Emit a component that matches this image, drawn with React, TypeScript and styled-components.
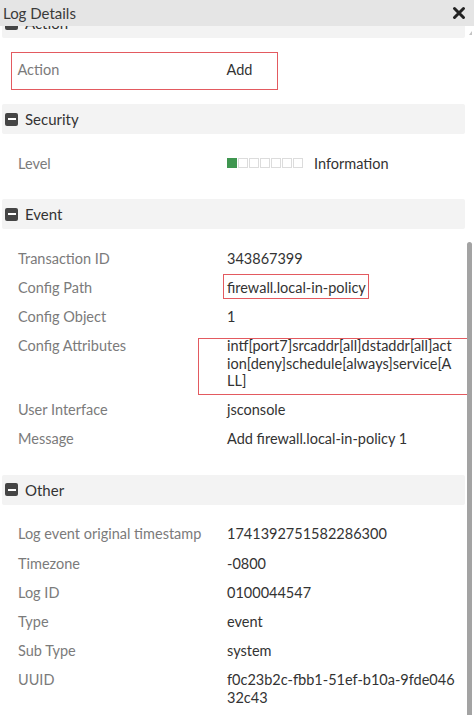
import React from "react";
import styled, { createGlobalStyle } from "styled-components";

const Global = createGlobalStyle`
  html, body { margin: 0; padding: 0; background: #fff; }
  body { font-family: Lato, "Open Sans", Arial, sans-serif; }
`;

const Page = styled.div`
  width: 474px;
  height: 715px;
  display: flex;
  flex-direction: column;
  overflow: hidden;
  background: #fff;
`;

const TitleBar = styled.div`
  height: 26px;
  flex: none;
  display: flex;
  align-items: center;
  justify-content: space-between;
  padding: 0 8px 0 3px;
  background: #e5e5e5;
  color: #3a3a3a;
  font-size: 15px;
  position: relative;
  z-index: 2;
`;

const CloseBtn = styled.button`
  border: 0;
  background: transparent;
  padding: 0;
  width: 14px;
  height: 14px;
  display: flex;
`;

const Viewport = styled.div`
  flex: 1;
  position: relative;
  overflow: hidden;
`;

const Content = styled.div<{ $scroll: number }>`
  margin-top: ${(p) => -p.$scroll}px;
`;

const Thumb = styled.div`
  position: absolute;
  right: 2px;
  top: 216px;
  bottom: 0;
  width: 5px;
  background: #a3a3a3;
  border-radius: 3px 3px 0 0;
`;

const UpArrow = styled.div`
  position: absolute;
  right: 2px;
  top: 5px;
  width: 0;
  height: 0;
  border-left: 3px solid transparent;
  border-bottom: 4px solid #c4c4c4;
`;

const SectionHeader = styled.div`
  height: 30px;
  margin: 0 9px 0 2px;
  padding-left: 3px;
  display: flex;
  align-items: center;
  gap: 7px;
  background: #f3f3f3;
  border-radius: 2px;
  color: #333;
  font-size: 15px;
`;

const ToggleIcon = styled.span`
  width: 13px;
  height: 13px;
  border-radius: 2px;
  background: #454545;
  display: flex;
  align-items: center;
  justify-content: center;
  &::after {
    content: "";
    width: 8px;
    height: 2.5px;
    background: #fff;
  }
`;

const SectionBody = styled.div<{ $top?: number; $bottom?: number }>`
  padding: ${(p) => p.$top ?? 14.5}px 0 ${(p) => p.$bottom ?? 20.5}px 18px;
`;

const Row = styled.div<{ $boxed?: boolean }>`
  display: grid;
  grid-template-columns: 209px 230px;
  padding: 6px 0;
  font-size: 14.5px;
  line-height: 17.2px;
  ${(p) =>
    p.$boxed &&
    `
    width: 267px;
    height: 38px;
    box-sizing: border-box;
    margin-left: -7px;
    padding: 0 0 3px 5.5px;
    align-items: center;
    grid-template-columns: 209px 1fr;
    border: 1.5px solid #e35a60;
  `}
`;

const Label = styled.div`
  color: #7b7b7b;
`;

const Value = styled.div`
  color: #333;
  word-break: break-all;
  display: flex;
  align-items: center;
  gap: 11px;
`;

const Marked = styled.span`
  position: relative;
`;

const Mark = styled.span<{ $inset: string }>`
  position: absolute;
  inset: ${(p) => p.$inset};
  border: 1.5px solid #e35a60;
  pointer-events: none;
`;

const Level = styled.span`
  display: flex;
  gap: 1px;
`;

const LevelCell = styled.span<{ $on?: boolean }>`
  width: 10px;
  height: 10px;
  box-sizing: border-box;
  background: ${(p) => (p.$on ? "#3f9650" : "#fff")};
  border: 1px solid ${(p) => (p.$on ? "#3f9650" : "#dcdcdc")};
`;

type Item = { label: string; value: React.ReactNode };

const Section = ({
  title,
  items,
  top,
  bottom,
}: {
  title: string;
  items: Item[];
  top?: number;
  bottom?: number;
}) => (
  <>
    <SectionHeader>
      <ToggleIcon />
      {title}
    </SectionHeader>
    <SectionBody $top={top} $bottom={bottom}>
      {items.map((it) => (
        <Row key={it.label}>
          <Label>{it.label}</Label>
          <Value>{it.value}</Value>
        </Row>
      ))}
    </SectionBody>
  </>
);

export default function App() {
  return (
    <Page>
      <Global />
      <TitleBar>
        Log Details
        <CloseBtn aria-label="Close">
          <svg width="14" height="14" viewBox="0 0 14 14">
            <path d="M2.5 2.5 L11.5 11.5 M11.5 2.5 L2.5 11.5" stroke="#222" strokeWidth="3" strokeLinecap="round" />
          </svg>
        </CloseBtn>
      </TitleBar>
      <Viewport>
        <Content $scroll={18}>
          <SectionHeader>
            <ToggleIcon />
            Action
          </SectionHeader>
          <SectionBody $top={14} $bottom={14}>
            <Row $boxed>
              <Label>Action</Label>
              <Value>Add</Value>
            </Row>
          </SectionBody>
          <Section
            title="Security"
            bottom={21.5}
            items={[
              {
                label: "Level",
                value: (
                  <>
                    <Level>
                      {[0, 1, 2, 3, 4, 5, 6].map((i) => (
                        <LevelCell key={i} $on={i === 0} />
                      ))}
                    </Level>
                    Information
                  </>
                ),
              },
            ]}
          />
          <Section
            title="Event"
            bottom={21.5}
            items={[
              { label: "Transaction ID", value: "343867399" },
              {
                label: "Config Path",
                value: (
                  <Marked>
                    firewall.local-in-policy
                    <Mark $inset="-4.5px -3px -3px -4px" />
                  </Marked>
                ),
              },
              { label: "Config Object", value: "1" },
              {
                label: "Config Attributes",
                value: (
                  <Marked>
                    intf[port7]srcaddr[all]dstaddr[all]act
                    <br />
                    ion[deny]schedule[always]service[A
                    <br />
                    LL]
                    <Mark $inset="1px -16px -6px -29px" />
                  </Marked>
                ),
              },
              { label: "User Interface", value: "jsconsole" },
              { label: "Message", value: "Add firewall.local-in-policy 1" },
            ]}
          />
          <Section
            title="Other"
            items={[
              { label: "Log event original timestamp", value: "1741392751582286300" },
              { label: "Timezone", value: "-0800" },
              { label: "Log ID", value: "0100044547" },
              { label: "Type", value: "event" },
              { label: "Sub Type", value: "system" },
              { label: "UUID", value: "f0c23b2c-fbb1-51ef-b10a-9fde04632c43" },
            ]}
          />
        </Content>
        <UpArrow />
        <Thumb />
      </Viewport>
    </Page>
  );
}
